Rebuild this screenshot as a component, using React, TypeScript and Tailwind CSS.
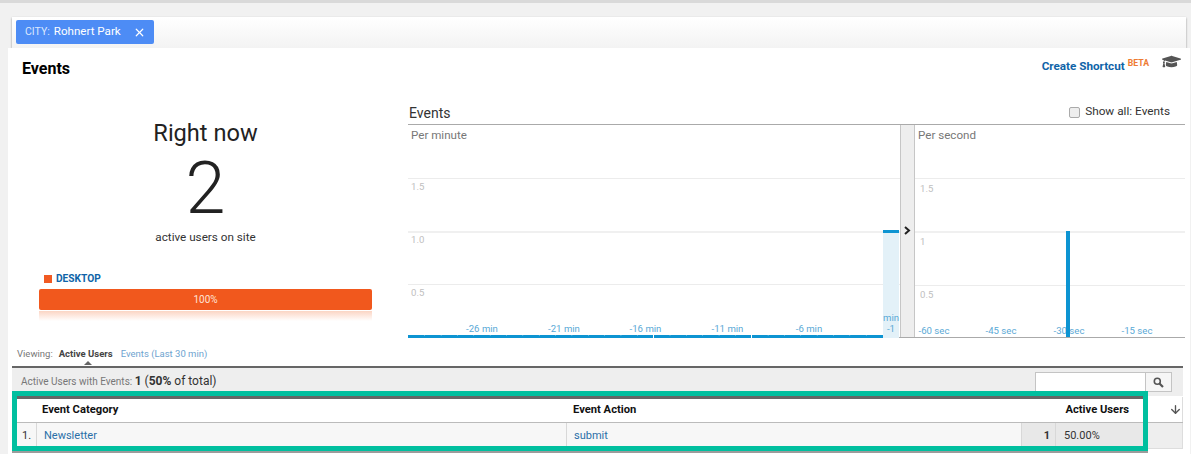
import React from 'react';
import { ArrowDown, X } from 'lucide-react';
import { FaGraduationCap } from 'react-icons/fa';

const minuteTicks = Array.from({ length: 28 }, (_, i) => 424.5 + i * 16.35);

function PerMinuteChart() {
  return (
    <svg width="492" height="213" viewBox="408 125 492 213" className="block shrink-0">
      <rect x="408" y="178" width="492" height="1" fill="#ececec" />
      <rect x="408" y="231" width="492" height="2" fill="#f0f0f0" />
      <rect x="408" y="284" width="492" height="1" fill="#ececec" />
      <rect x="883" y="232" width="16" height="106" fill="#e3f1f8" />
      <rect x="883" y="230" width="16" height="3" fill="#0d94d2" />
      <rect x="408" y="335" width="475" height="3" fill="#0d94d2" />
      {minuteTicks.map((x) => (
        <rect key={x} x={x} y="335" width="0.5" height="1" fill="#ffffff" fillOpacity="0.6" />
      ))}
      <rect x="653" y="335" width="1" height="3" fill="#ffffff" />
      <rect x="751" y="335" width="1" height="3" fill="#ffffff" />
      <g fontSize="9.6" fill="#c0c0c0" fontFamily="Roboto, sans-serif">
        <text x="411" y="190">1.5</text>
        <text x="411" y="243">1.0</text>
        <text x="411" y="296">0.5</text>
      </g>
      <g fontSize="9.6" fill="#5aa9d6" fontFamily="Roboto, sans-serif" textAnchor="middle">
        <text x="482" y="332">-26 min</text>
        <text x="564" y="332">-21 min</text>
        <text x="645.5" y="332">-16 min</text>
        <text x="727.5" y="332">-11 min</text>
        <text x="809" y="332">-6 min</text>
        <text x="891" y="321">min</text>
        <text x="891" y="332">-1</text>
      </g>
    </svg>
  );
}

function PerSecondChart() {
  return (
    <svg width="270" height="213" viewBox="915 125 270 213" className="block shrink-0">
      <rect x="915" y="178" width="270" height="1" fill="#ececec" />
      <rect x="915" y="231" width="270" height="2" fill="#f0f0f0" />
      <rect x="915" y="285" width="270" height="1" fill="#ececec" />
      <g fontSize="9.6" fill="#c0c0c0" fontFamily="Roboto, sans-serif">
        <text x="920" y="192">1.5</text>
        <text x="920" y="245">1</text>
        <text x="920" y="298">0.5</text>
      </g>
      <g fontSize="9.6" fill="#5aa9d6" fontFamily="Roboto, sans-serif" textAnchor="middle">
        <text x="934" y="334">-60 sec</text>
        <text x="1001" y="334">-45 sec</text>
        <text x="1069" y="334">-30 sec</text>
        <text x="1137" y="334">-15 sec</text>
      </g>
      <rect x="1066" y="231" width="4" height="106" fill="#0d94d2" />
    </svg>
  );
}

export default function App() {
  return (
    <div className="h-[454px] w-[1191px] overflow-hidden bg-[#f1f1f1] border-t-[3px] border-[#d9d9d9] font-['Roboto',sans-serif]">
      {/* filter bar */}
      <div className="ml-[12px] mt-[14px] h-[31px] w-[1174px] bg-gradient-to-b from-white to-[#f3f3f3] shadow-[0_1px_2px_rgba(0,0,0,0.4)] pt-[3px] pl-[4px]">
        <div className="flex h-[24px] w-[138px] items-center rounded-[2px] bg-[#4d8cf5] pl-[9px] text-white">
          <span className="text-[10.5px] text-[#dce8fd]">CITY:</span>
          <span className="ml-[4px] text-[11.6px] leading-none">Rohnert Park</span>
          <X size={13} strokeWidth={2.2} className="ml-[12px]" />
        </div>
      </div>

      <div className="ml-[8px] h-[406px] w-[1182px] bg-white">
        {/* title row */}
        <div className="flex h-[48px] items-start justify-between">
          <h1 className="ml-[14px] mt-[10px] text-[16px] font-bold leading-[22px] text-black">Events</h1>
          <div className="mr-[9px] mt-[8px] flex items-start">
            <span className="mt-[3px] text-[11.7px] font-bold leading-[14px] text-[#0f64a8]">Create Shortcut</span>
            <span className="ml-[3px] mt-[2px] text-[8.7px] font-bold leading-[10px] text-[#ee7b33]">BETA</span>
            <FaGraduationCap size={19} className="ml-[13px] mt-[-4px] text-[#555555]" />
          </div>
        </div>

        <div className="flex h-[241px]">
          {/* right now panel */}
          <div className="ml-[31px] w-[333px] shrink-0">
            <div className="mt-[21px] text-center text-[23.6px] leading-[32px] text-[#222222]">Right now</div>
            <div className="mt-[-2px] text-center text-[72px] font-light leading-[84px] text-[#222222]">2</div>
            <div className="mt-[-2px] text-center text-[11.7px] leading-[16px] text-[#333333]">active users on site</div>
            <div className="ml-[5px] mt-[28px] flex items-center">
              <span className="h-[8px] w-[8px] bg-[#f15a22]" />
              <span className="ml-[4px] text-[10.2px] font-bold leading-[12px] text-[#0f64a8]">DESKTOP</span>
            </div>
            <div className="mt-[4px] flex h-[21px] items-center justify-center rounded-[2px] bg-[#f1581d] text-[10px] text-[#ffe3d6]">
              100%
            </div>
            <div className="mt-px h-[10px] bg-gradient-to-b from-[#fbd5c4] to-white" />
          </div>

          {/* chart panel */}
          <div className="ml-[36px] w-[777px] shrink-0">
            <div className="mt-[6px] flex h-[22px] items-center justify-between">
              <span className="ml-[1px] text-[14px] leading-[20px] text-[#333333]">Events</span>
              <label className="mb-[2px] mr-[15px] flex items-center text-[11.8px] text-[#333333]">
                <span className="h-[11px] w-[11px] rounded-[2px] border border-[#aaaaaa] bg-[#eeeeee]" />
                <span className="ml-[5px]">Show all: Events</span>
              </label>
            </div>
            <div className="flex h-[214px] border-t border-b border-t-[#aaaaaa] border-b-[#aaaaaa]">
              <div className="relative w-[492px] shrink-0">
                <span className="absolute left-[3px] top-[3px] text-[11.6px] leading-[14px] text-[#777777]">Per minute</span>
                <PerMinuteChart />
              </div>
              <div className="flex w-[15px] shrink-0 items-start justify-center border-x border-[#c6c6c6] bg-[#eeeeee] pt-[101px]">
                <svg width="7" height="9" viewBox="0 0 7 9">
                  <path d="M1 1l4 3.5L1 8" fill="none" stroke="#222222" strokeWidth="2" />
                </svg>
              </div>
              <div className="relative w-[270px] shrink-0">
                <span className="absolute left-[3px] top-[3px] text-[11.6px] leading-[14px] text-[#777777]">Per second</span>
                <PerSecondChart />
              </div>
            </div>
          </div>
        </div>

        {/* viewing tabs */}
        <div className="ml-[9px] mt-[9px] flex h-[16px] items-center text-[9.5px]">
          <span className="text-[#777777]">Viewing:</span>
          <span className="relative ml-[6px] font-bold text-[#444444]">
            Active Users
            <span className="absolute left-[25px] top-[14px] h-0 w-0 border-x-[4px] border-b-[4px] border-x-transparent border-b-[#666666]" />
          </span>
          <span className="ml-[8px] text-[#6ea3cf]">Events (Last 30 min)</span>
        </div>

        {/* table */}
        <div className="relative ml-[4px] mt-[4px] w-[1171px]">
          <div className="flex h-[30px] border-t-2 border-[#666666] bg-[#eeeeee]">
            <div className="ml-[9px] mt-[6px] text-[10px] leading-[14px] text-[#777777]">
              Active Users with Events: <span className="text-[12px] text-[#333333]"><b>1</b> (<b>50%</b> of total)</span>
            </div>
            <div className="ml-auto mr-[11px] mt-[4px] flex h-[20px]">
              <div className="h-full w-[111px] border border-[#c4c4c4] bg-white" />
              <div className="flex h-full w-[26px] items-center justify-center border-y border-r border-[#c4c4c4] bg-[#f6f6f6]">
                <svg width="11" height="11" viewBox="0 0 11 11">
                  <circle cx="4.3" cy="4.3" r="3" fill="none" stroke="#555555" strokeWidth="1.6" />
                  <path d="M6.5 6.5l3.5 3.5" stroke="#555555" strokeWidth="2.2" />
                </svg>
              </div>
            </div>
          </div>
          <div className="flex h-[27px] border-b border-[#bbbbbb] bg-white pt-[1px] text-[11.2px] font-bold leading-[25px] text-[#111111]">
            <div className="w-[25px] shrink-0" />
            <div className="w-[530px] shrink-0 pl-[5px]">Event Category</div>
            <div className="w-[454px] shrink-0 pl-[6px]">Event Action</div>
            <div className="w-[122px] shrink-0 pr-[14px] text-right">Active Users</div>
            <div className="flex flex-1 items-center justify-end border-r border-[#dddddd] font-normal text-[#555555]">
              <ArrowDown size={13} strokeWidth={2.5} />
            </div>
          </div>
          <div className="flex h-[26px] border-b border-[#dddddd] text-[11px] leading-[25px]">
            <div className="w-[25px] shrink-0 border-r border-[#d8d8d8] bg-[#f7f7f7] pl-[10px] text-[#333333]">1.</div>
            <div className="w-[530px] shrink-0 border-r border-[#d8d8d8] bg-[#f7f7f7] pl-[7px] text-[#2a6fa8]">Newsletter</div>
            <div className="w-[454px] shrink-0 bg-[#f7f7f7] pl-[7px] text-[#2a6fa8]">submit</div>
            <div className="w-[35px] shrink-0 border-x border-[#d8d8d8] bg-[#e8e8e8] pr-[5px] text-right font-bold text-[#333333]">1</div>
            <div className="w-[87px] shrink-0 bg-[#e8e8e8] pl-[8px] text-[#333333]">50.00%</div>
            <div className="flex-1 border-r border-[#dddddd] bg-[#eeeeee]" />
          </div>
          {/* green annotation drawn over the table */}
          <div className="pointer-events-none absolute left-0 top-[25px] h-[60px] w-[1136px] border-[5px] border-[#00bf9f] shadow-[0_2px_0_0_rgba(90,90,90,0.6),inset_0_3px_0_0_#666666]" />
        </div>
      </div>
    </div>
  );
}
